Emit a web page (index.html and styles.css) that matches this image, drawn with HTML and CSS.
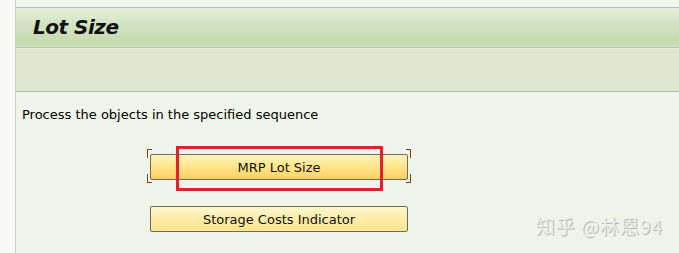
FILE: index.html
```html
<!DOCTYPE html>
<html lang="en">
<head>
    <meta charset="UTF-8">
    <title>Lot Size</title>
    <link rel="stylesheet" href="styles.css">
</head>
<body>
    <div class="page">
        <div class="side"></div>
        <div class="main">
            <div class="top-strip"></div>
            <div class="title-bar">
                <h1>Lot Size</h1>
            </div>
            <div class="tool-bar"></div>

            <div class="content">
                <p class="intro">Process the objects in the specified sequence</p>

                <div class="buttons">
                    <div class="btn-wrap focused">
                        <button class="sap-button">MRP Lot Size</button>
                        <span class="highlight"></span>
                    </div>
                    <div class="btn-wrap">
                        <button class="sap-button">Storage Costs Indicator</button>
                    </div>
                </div>
            </div>
        </div>
    </div>

    <p class="watermark">知乎 @林恩94</p>
</body>
</html>
```

FILE: styles.css
```css
body {
    margin: 0;
    background: #f8f9f7;
    font-family: 'DejaVu Sans', sans-serif;
    color: #000;
    overflow: hidden;
}

.page {
    display: flex;
    height: 253px;
}

/* Franja izquierda */
.side {
    width: 15px;
    flex-shrink: 0;
    border-right: 1px solid #c9d1c4;
    background: #f9faf8;
}

.main {
    flex: 1;
    display: flex;
    flex-direction: column;
    background: #eff4ea;
}

.top-strip {
    height: 7px;
    background: #f1f7ee;
}

/* Cabecera */
.title-bar {
    height: 39px;
    border-top: 1px solid #b5c2ad;
    border-bottom: 1px solid #b7c7ae;
    background: linear-gradient(#e4f0da, #d2e2c2 45%, #c4dbad 90%, #cfe0bf);
    display: flex;
    align-items: center;
    padding-left: 17px;
}

.title-bar h1 {
    margin: 0;
    font-family: Verdana, 'DejaVu Sans', sans-serif;
    font-size: 20px;
    font-weight: bold;
    font-style: italic;
    letter-spacing: -0.5px;
    color: #111;
    padding-bottom: 2px;
}

.tool-bar {
    height: 42px;
    border-top: 1px solid #e8eedd;
    border-bottom: 1px solid #b5c1ab;
    background: #dfe7cf;
}

/* Contenido */
.content {
    flex: 1;
    padding: 15px 0 0 6px;
}

.intro {
    margin: 0;
    font-family: 'DejaVu Sans', sans-serif;
    font-size: 13px;
    line-height: 16px;
}

.buttons {
    display: flex;
    flex-direction: column;
    gap: 26px;
    margin: 31px 0 0 128px;
    width: 258px;
}

.btn-wrap {
    position: relative;
}

.sap-button {
    display: block;
    width: 258px;
    height: 26px;
    padding: 0;
    border: 1px solid #6e6a5c;
    border-radius: 2px;
    background: linear-gradient(#fff3bd, #ffe68e 45%, #fcd66b 90%, #f2c861);
    font-family: 'DejaVu Sans', sans-serif;
    font-size: 13px;
    color: #111;
}

.btn-wrap:last-child .sap-button {
    background: linear-gradient(#fff7cf, #ffeda8 50%, #fde48d);
}

/* Corchetes de foco (solo esquinas) */
.focused::before,
.focused::after {
    content: "";
    position: absolute;
    top: -5px;
    bottom: -3px;
    width: 5px;
    --c: linear-gradient(#8b3a1c, #8b3a1c);
    background:
        var(--c) top / 5px 1px no-repeat,
        var(--c) bottom / 5px 1px no-repeat;
}

.focused::before {
    left: -3px;
    background:
        var(--c) left top / 5px 1px no-repeat,
        var(--c) left bottom / 5px 1px no-repeat,
        var(--c) left top / 1px 9px no-repeat,
        var(--c) left bottom / 1px 9px no-repeat;
}

.focused::after {
    right: -3px;
    background:
        var(--c) right top / 5px 1px no-repeat,
        var(--c) right bottom / 5px 1px no-repeat,
        var(--c) right top / 1px 9px no-repeat,
        var(--c) right bottom / 1px 9px no-repeat;
}

/* Marco rojo */
.highlight {
    position: absolute;
    left: 26px;
    top: -8px;
    width: 201px;
    height: 39px;
    border: 3px solid #e3212d;
}

.watermark {
    position: absolute;
    right: 16px;
    bottom: 14px;
    margin: 0;
    font-family: 'Noto Sans CJK SC', sans-serif;
    font-size: 19px;
    letter-spacing: 1px;
    color: #eceee9;
    text-shadow: 1px 1px 0 #b4b7b1;
}
```
